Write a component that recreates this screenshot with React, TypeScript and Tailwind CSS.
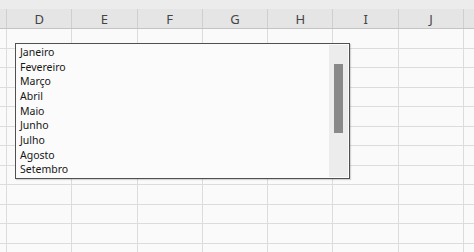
import React from 'react'

const cols = ['D', 'E', 'F', 'G', 'H', 'I', 'J']
const months = ['Janeiro', 'Fevereiro', 'Março', 'Abril', 'Maio', 'Junho', 'Julho', 'Agosto', 'Setembro']

export default function App() {
  return (
    <div className="relative h-[252px] w-[474px] overflow-hidden bg-[#fafafa] font-['Noto_Sans',sans-serif]">
      {/* ── column headers ─────────────────────── */}
      <div className="h-[9px] bg-[#ececec]" />
      <div className="flex h-[20px] border-b border-[#c4c4c4] bg-[#e5e5e5] text-[13px] text-[#444]">
        <div className="w-[7px] shrink-0 border-r border-[#cfcfcf]" />
        {cols.map(c => (
          <div key={c} className="flex w-[65.3px] shrink-0 items-center justify-center border-r border-[#cfcfcf] pt-[2px]">
            {c}
          </div>
        ))}
        <div className="flex-1" />
      </div>

      {/* ── cell grid ─────────────────────────── */}
      <div className="flex flex-col">
        {Array.from({ length: 12 }).map((_, r) => (
          <div key={r} className="flex h-[19.55px] border-b border-[#dcdcdc]">
            <div className="w-[7px] shrink-0 border-r border-[#dcdcdc]" />
            {cols.map(c => (
              <div key={c} className="w-[65.3px] shrink-0 border-r border-[#dcdcdc]" />
            ))}
            <div className="flex-1" />
          </div>
        ))}
      </div>

      {/* ── list box control ─────────────────── */}
      <div className="absolute left-[15px] top-[43px] flex h-[136px] w-[335px] border-[1.5px] border-[#505050] bg-[#fbfbfb] shadow-[1px_1px_1px_rgba(0,0,0,0.15)]">
        <div className="flex flex-1 flex-col pl-[4px] pt-[1px] text-[10.5px] leading-[14.67px] text-[#161616]">
          {months.map(m => <span key={m}>{m}</span>)}
        </div>
        <div className="mb-[1px] mr-[1px] mt-[1px] flex w-[19px] justify-center bg-[#ececec] pt-[19px]">
          <div className="h-[69px] w-[9px] bg-[#898989]" />
        </div>
      </div>
    </div>
  )
}
